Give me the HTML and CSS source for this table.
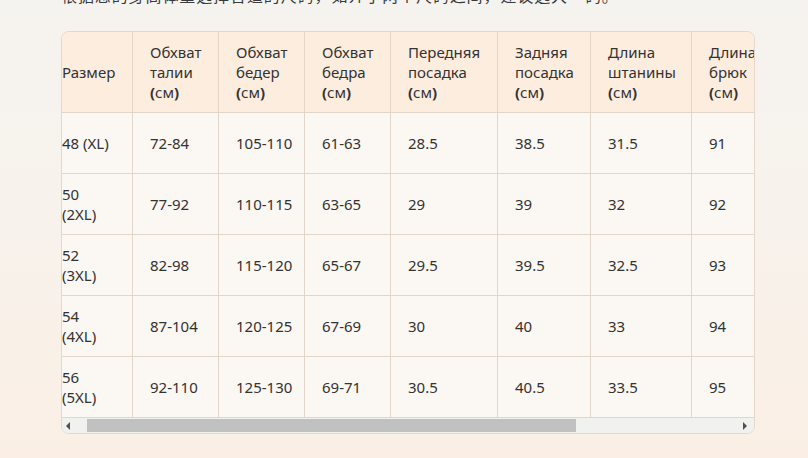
FILE: index.html
```html
<!DOCTYPE html>
<html lang="ru">
<head>
<meta charset="utf-8">
<title>Таблица размеров</title>
<link rel="stylesheet" href="styles.css">
</head>
<body>
<div class="page">
  <p class="intro">根据您的身高体重选择合适的尺码，如介于两个尺码之间，建议选大一码。</p>
  <div class="table-box">
    <div class="table-scroll">
      <table class="sizes">
        <colgroup>
          <col class="c1"><col class="c2"><col class="c3"><col class="c4"><col class="c5"><col class="c6"><col class="c7"><col class="c8"><col class="c9"><col class="c10">
        </colgroup>
        <thead>
          <tr>
            <th>Размер</th>
            <th>Обхват<br>талии<br><span class="p">(</span>см<span class="p">)</span></th>
            <th>Обхват<br>бедер<br><span class="p">(</span>см<span class="p">)</span></th>
            <th>Обхват<br>бедра<br><span class="p">(</span>см<span class="p">)</span></th>
            <th>Передняя<br>посадка<br><span class="p">(</span>см<span class="p">)</span></th>
            <th>Задняя<br>посадка<br><span class="p">(</span>см<span class="p">)</span></th>
            <th>Длина<br>штанины<br><span class="p">(</span>см<span class="p">)</span></th>
            <th>Длина<br>брюк<br><span class="p">(</span>см<span class="p">)</span></th>
            <th>Рекомен-<br>дуемый вес<br><span class="p">(</span>кг<span class="p">)</span></th>
            <th>Рост<br><span class="p">(</span>см<span class="p">)</span></th>
          </tr>
        </thead>
        <tbody>
          <tr><td>48 (XL)</td><td>72-84</td><td>105-110</td><td>61-63</td><td>28.5</td><td>38.5</td><td>31.5</td><td>91</td><td>60-70</td><td>165-170</td></tr>
          <tr><td>50<br>(2XL)</td><td>77-92</td><td>110-115</td><td>63-65</td><td>29</td><td>39</td><td>32</td><td>92</td><td>70-80</td><td>170-175</td></tr>
          <tr><td>52<br>(3XL)</td><td>82-98</td><td>115-120</td><td>65-67</td><td>29.5</td><td>39.5</td><td>32.5</td><td>93</td><td>80-90</td><td>175-180</td></tr>
          <tr><td>54<br>(4XL)</td><td>87-104</td><td>120-125</td><td>67-69</td><td>30</td><td>40</td><td>33</td><td>94</td><td>90-100</td><td>180-185</td></tr>
          <tr><td>56<br>(5XL)</td><td>92-110</td><td>125-130</td><td>69-71</td><td>30.5</td><td>40.5</td><td>33.5</td><td>95</td><td>100-110</td><td>185-190</td></tr>
        </tbody>
      </table>
    </div>
    <div class="scrollbar">
      <span class="arrow arrow-left"></span>
      <span class="track"><span class="thumb"></span></span>
      <span class="arrow arrow-right"></span>
    </div>
  </div>
</div>
</body>
</html>
```

FILE: styles.css
```css
html, body {
  margin: 0;
  padding: 0;
}
body {
  background: linear-gradient(180deg, #f5f3ef 0%, #f8f2eb 55%, #fbefe5 100%);
  min-height: 458px;
  font-family: "Noto Sans", "Open Sans", "Noto Sans CJK SC", sans-serif;
  color: #333;
  overflow: hidden;
}
.page {
  padding-left: 61px;
  width: 694px;
}
.intro {
  margin: -17px 0 24px 0;
  font-family: "Noto Sans CJK SC", sans-serif;
  font-size: 16px;
  line-height: 24px;
  letter-spacing: 0.9px;
  color: #3a3a3a;
  white-space: nowrap;
}
.table-box {
  border: 1px solid #e4d8cc;
  border-radius: 8px;
  overflow: hidden;
  background: #fbf7f2;
}
.table-scroll {
  overflow: hidden;
}
.sizes {
  table-layout: fixed;
  border-collapse: separate;
  border-spacing: 0;
  width: 946px;
  font-size: 15px;
  line-height: 20px;
}
.c1 { width: 71px; }
.c2, .c3, .c4 { width: 86px; }
.c5 { width: 107px; }
.c6 { width: 93px; }
.c7 { width: 101px; }
.c8 { width: 100px; }
.c9 { width: 110px; }
.c10 { width: 106px; }
.sizes th,
.sizes td {
  box-sizing: border-box;
  text-align: left;
  vertical-align: middle;
  padding: 0 8px 0 17px;
  border-right: 1px solid #e2d6ca;
  border-bottom: 1px solid #e2d6ca;
  font-weight: 400;
}
.sizes th {
  height: 81px;
  background: #fdeddf;
}
.sizes td {
  height: 61px;
  background: #fbf7f2;
}
.sizes th:first-child,
.sizes td:first-child {
  padding-left: 0;
}
.p {
  font-weight: 700;
}
.scrollbar {
  display: flex;
  align-items: center;
  height: 15px;
  background: #f1f1f0;
}
.arrow {
  width: 25px;
  height: 15px;
  display: flex;
  align-items: center;
  justify-content: center;
  flex: none;
}
.arrow::before {
  content: "";
  width: 0;
  height: 0;
  border-top: 4px solid transparent;
  border-bottom: 4px solid transparent;
}
.arrow-left {
  justify-content: flex-start;
  padding-left: 4px;
  box-sizing: border-box;
}
.arrow-left::before {
  border-right: 4px solid #505050;
}
.arrow-right {
  width: 14px;
  justify-content: flex-start;
  padding-left: 3px;
  box-sizing: border-box;
}
.arrow-right::before {
  border-left: 4px solid #505050;
}
.track {
  flex: 1;
  height: 13px;
  display: flex;
}
.thumb {
  width: 489px;
  height: 13px;
  background: #c1c1c1;
}
```
